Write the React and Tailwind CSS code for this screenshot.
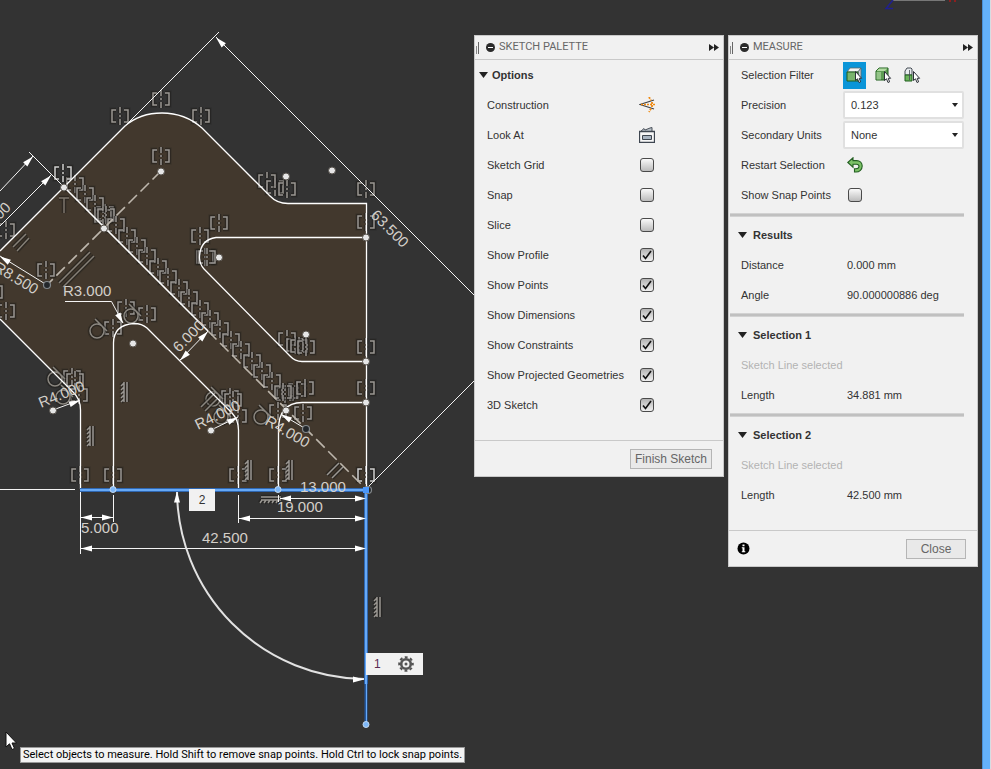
import React, { useState } from "react";

const UI_FONT = "font-['Liberation_Sans',Arial,sans-serif]";

/* ---------- sketch canvas glyphs ---------- */

const SYMMETRY =
  "M-4 -6H-8V6H-4M4 -6H8V6H4M0 -9V-3M0 -1V1M0 3V9";
const TANGENT = "M-7 0a7 7 0 1 0 14 0a7 7 0 1 0 -14 0M-2 -12L10 0";
const FIXED =
  "M3 -10V10M0 -10V10M0 -9L-3 -6M0 -5L-3 -2M0 -1L-3 2M0 3L-3 6M0 7L-3 10";
const FIXED_FLAT =
  "M-10 -3H10M-10 0H10M-9 0L-11 3M-5 0L-7 3M-1 0L-3 3M3 0L1 3M7 0L5 3";

function Glyph({ d, x, y, color = "#9a9792" }) {
  return (
    <g transform={`translate(${x} ${y})`} fill="none">
      <path d={d} stroke="#1d1b19" strokeOpacity="0.25" strokeWidth="5" />
      <path d={d} stroke="#1d1b19" strokeOpacity="0.5" strokeWidth="3.4" />
      <path d={d} stroke={color} strokeWidth="1.5" />
    </g>
  );
}

const chain = Array.from({ length: 21 }, (_, i) => [
  Math.round(74.5 + i * 10.42),
  Math.round(183.5 + i * 10.42),
]);

const symmetryMarks = [
  [161, 99], [120, 116], [201, 116], [161, 156], [105, 213], [103, 216],
  [219, 223], [200, 236], [205, 257], [207, 257],
  [267, 181], [275, 187], [287, 189], [366, 189], [366, 222], [366, 347],
  [366, 388], [287, 339], [295, 345], [299, 346], [306, 347],
  [285, 394], [290, 392], [297, 390], [305, 388], [278, 411], [303, 413],
  [238, 475], [278, 475], [80, 475], [113, 475],
  [6, 230], [46, 270], [6, 311], [-6, 292],
  [126, 308], [147, 314], [113, 328],
  [72, 377], [75, 380], [79, 395],
  [230, 397], [233, 400], [238, 416],
];
const tangentMarks = [
  [97, 331], [131, 316], [55, 379], [63, 397], [213, 399], [221, 417], [261, 417],
];
const fixedMarks = [[90, 436], [124, 392], [248, 470], [289, 470], [377, 607]];
const points = [
  [64, 187], [161, 171], [104, 228], [366, 237], [366, 361], [366, 402],
  [286, 176], [332, 170], [219, 257], [306, 334], [133, 343], [53, 410],
  [211, 430], [286, 410],
];
const hollowPoints = [[47, 285], [306, 429], [368, 490]];
const bluePoints = [[113, 489], [278, 489], [366, 724]];

const arrows = [
  [216, 37, 225], [33, 156, -45], [51, 175, -45],
  [0, 256, 212], [123, 323, 62], [208, 331, -45], [180, 360, 135],
  [80, 400, -20], [238, 417, -25], [281, 414, 210],
  [81, 517, 180], [113, 517, 0], [81, 548, 180], [366, 548, 0],
  [280, 498, 180], [366, 498, 0], [239, 518, 180], [366, 518, 0],
  [177, 491, -90], [364, 679, 0],
];

const dimensions = [
  ["63.500", 370, 216, 45], ["R8.500", -7, 270, 31], ["R3.000", 63, 296, 0],
  ["6.000", 179, 353, -45], ["R4.000", 41, 408, -22], ["R4.000", 198, 430, -26],
  ["R4.000", 264, 424, 30], ["5.000", 81, 533, 0], ["42.500", 202, 543, 0],
  ["13.000", 300, 492, 0], ["19.000", 277, 512, 0], ["8.500", -15, 235, -45],
];

function SketchCanvas() {
  return (
    <svg className="absolute inset-0 h-full w-full" aria-label="Sketch canvas">
      <path
        d="M366 489V203H288Q277 203 270 196L202 128Q185 113 162 113Q140 113 125 126L0 251V319L73 392Q80 399 80 410V489Z"
        fill="#42382d"
      />

      {symmetryMarks.map(([x, y], i) => (
        <Glyph key={i} d={SYMMETRY} x={x} y={y} />
      ))}
      {chain.map(([x, y], i) => (
        <Glyph key={i} d={SYMMETRY} x={x} y={y} />
      ))}
      <Glyph d={SYMMETRY} x={63} y={173} color="#d0d0d0" />
      <Glyph d={SYMMETRY} x={366} y={475} color="#d0d0d0" />
      {tangentMarks.map(([x, y], i) => (
        <Glyph key={i} d={TANGENT} x={x} y={y} color="#8a867f" />
      ))}
      {fixedMarks.map(([x, y], i) => (
        <Glyph key={i} d={FIXED} x={x} y={y} />
      ))}
      <Glyph d={FIXED_FLAT} x={271} y={500} />
      <Glyph d="M-5 -7H5M0 -7V8" x={64} y={205} color="#7d766c" />
      <Glyph d="M-8 5L5 -8M-4 9L8 -4" x={21} y={242} color="#857f76" />
      <Glyph d="M-18 14L13 -17M-14 18L17 -13" x={77} y={269} color="#857f76" />
      <Glyph d="M-8 5L4 -7M-3 8L8 -3" x={335} y={470} />
      <Glyph d="M-12 8L2 -6M-8 12L4 0" x={213} y={399} color="#8a867f" />

      {/* profile edges */}
      <g fill="none" stroke="#ffffff" strokeWidth="1.3">
        <path d="M0 251L125 126Q140 113 162 113Q185 113 202 128L270 196Q277 203.500 288 203.500H366.500V489" />
        <path d="M0 319L73 392Q80.500 399 80.500 410V489" />
        <path d="M366 237.500H216Q199.500 240 199.500 258Q200 265 204 269L290 356Q295 361.500 302 361.500H366" />
        <path d="M366 402.500H302Q278.500 403 278.500 430V489" />
        <path d="M238.500 489V430Q238.500 420 232 413L147 328Q142 323.500 134 323.500Q113.500 325 113.500 343V489" />
        <path d="M64 187L208 331" strokeWidth="1.6" />
      </g>

      {/* construction lines */}
      <g fill="none" stroke="#bdb6ac" strokeWidth="1.6">
        <path d="M208 331L366 489" strokeDasharray="12 5" />
        <path d="M161 171L47 285" strokeDasharray="12 5" />
      </g>

      {/* dimension and extension lines */}
      <g fill="none" stroke="#f4f4f4" strokeWidth="1">
        <path d="M125 126L219 32M216 37L474 295M366 489L474 381" />
        <path d="M29 152L64 187M33 156L0 191M51 175L0 226" />
        <path d="M0 256L47 285M65 301.500H111.500L123 323M208 331L180 360" />
        <path d="M53 410L80 400M211 430L238 417M281 414L306 429" />
        <path d="M0 489.500H75M80.500 489V554M113.500 495V522M238.500 495V523M278.500 495V502M366.500 495V553" />
        <path d="M81 517.500H113M81 548.500H366M280 498.500H366M239 518.500H366" />
      </g>

      {/* measured angle and highlighted selections */}
      <path d="M177 491A189 189 0 0 0 364 679" fill="none" stroke="#e2e2e2" strokeWidth="2" />
      <g fill="none">
        <path d="M80 490H366V684" stroke="#2f67b1" strokeWidth="4" />
        <path d="M366 680V724" stroke="#2559a0" strokeWidth="3" />
        <path d="M80 490H366V684" stroke="#66a9f7" strokeWidth="2" />
        <path d="M366.500 684V724" stroke="#66a9f7" strokeWidth="1" />
      </g>

      {arrows.map(([x, y, a], i) => (
        <path
          key={i}
          d="M0 0L-11 -3V3Z"
          fill="#ffffff"
          transform={`translate(${x} ${y + 0.5}) rotate(${a})`}
        />
      ))}
      {points.map(([x, y], i) => (
        <circle key={i} cx={x} cy={y + 0.5} r="3.5" fill="#e6e6e6" stroke="#55504a" strokeWidth="1" />
      ))}
      {hollowPoints.map(([x, y], i) => (
        <circle key={i} cx={x} cy={y} r="3.500" fill="#23272b" stroke="#82878b" strokeWidth="1.2" />
      ))}
      {bluePoints.map(([x, y], i) => (
        <circle key={i} cx={x} cy={y + 0.5} r="3" fill="#7db7f8" stroke="#c2d8ef" strokeWidth="1" />
      ))}
      <path d="M363 487H369V493H363Z" fill="#4b98fb" />

      <g fill="#d3cfc9" className="font-['Liberation_Sans',Arial,sans-serif] text-[15px]">
        {dimensions.map(([t, x, y, a], i) => (
          <text key={i} transform={`translate(${x} ${y}) rotate(${a})`}>
            {t}
          </text>
        ))}
      </g>

      {/* axis triad fragment */}
      <path d="M892 0.500H945" stroke="#777" strokeWidth="1" />
      <path d="M893 0L886 8.500H893" fill="none" stroke="#20208f" strokeWidth="1.500" />
      <path d="M949 1H951M954 1H956" stroke="#8c1f1f" strokeWidth="2" />
    </svg>
  );
}

/* ---------- icons ---------- */

function ConstructionIcon() {
  return (
    <svg width="16" height="16" viewBox="0 0 16 16" fill="none">
      <path d="M15 3L1 7.500L15 12" stroke="#3d4248" strokeWidth="1.3" />
      <path d="M2 7.500H16" stroke="#f08a12" strokeWidth="1.3" strokeDasharray="2 1" />
      <path d="M10 0L12 3.500M13 5V10M12 11.500L10 15" stroke="#f08a12" strokeWidth="1.8" strokeDasharray="2 1" />
    </svg>
  );
}

function LookAtIcon() {
  return (
    <svg width="16" height="16" viewBox="0 0 16 16" fill="none">
      <path d="M1.500 4.500L5 1.500L6 3L11 1L13 0.500V4.500" fill="#b9c0c7" stroke="#4b525b" />
      <path d="M0.500 4.500H15.500V15.500H0.500Z" fill="#f7f7f7" stroke="#3e4650" strokeWidth="1.3" />
      <path d="M3.500 8.500H12.500V12.500H3.500Z" fill="#a9b5c2" stroke="#3e4650" />
    </svg>
  );
}

function Pointer() {
  return (
    <path
      d="M9.500 4.500V13.500L11.500 11.800L13 15.500L14.600 14.800L13.200 11.300H15.600Z"
      fill="#fff"
      stroke="#2c3038"
      strokeWidth="1"
    />
  );
}

function FaceFilterIcon() {
  return (
    <svg width="17" height="17" viewBox="0 0 17 17">
      <path d="M1 5L4 1H15L12 5Z" fill="#f4f4f4" stroke="#5d6a6a" strokeWidth="0.8" />
      <path d="M12 5L15 1V11L12 14Z" fill="#c7ccd2" stroke="#5d6a6a" strokeWidth="0.8" />
      <path d="M1 5H12V14H1Z" fill="#79b36c" stroke="#1f5f1c" strokeWidth="1" />
      <Pointer />
    </svg>
  );
}

function BodyFilterIcon() {
  return (
    <svg width="17" height="17" viewBox="0 0 17 17">
      <path d="M1 4L4 1H13V10L10 13H1Z" fill="#5c9c53" stroke="#1f5f1c" strokeWidth="1" />
      <path d="M1.500 4L4 1.500H12.500L10 4Z" fill="#b4dba4" />
      <path d="M1.500 5H6V12.500H1.500Z" fill="#94c488" />
      <Pointer />
    </svg>
  );
}

function ComponentFilterIcon() {
  return (
    <svg width="17" height="17" viewBox="0 0 17 17">
      <path d="M1 4L3 1H7L8 2V8H1Z" fill="#e9ecef" stroke="#454c54" strokeWidth="1" />
      <path d="M1 8H8V14H1Z" fill="#6cb35c" stroke="#1f5f1c" strokeWidth="1" />
      <path d="M5.500 3V13" stroke="#454c54" strokeWidth="0.8" />
      <Pointer />
    </svg>
  );
}

function RestartIcon() {
  return (
    <svg width="16" height="16" viewBox="0 0 16 16">
      <path
        d="M0.800 5.500L6 0.800V3.600H9.500C13 3.600 15.200 6 15.200 9C15.200 12.500 12.500 15 9 15H7.500V11.800H9C10.800 11.800 12 10.700 12 9.300C12 8 11 7.200 9.500 7.200H6V10.200Z"
        fill="#7cc267"
        stroke="#235f22"
        strokeWidth="1.1"
      />
    </svg>
  );
}

function GearIcon() {
  return (
    <svg width="16" height="16" viewBox="0 0 16 16" fill="none">
      <circle cx="8" cy="8" r="6.800" stroke="#555" strokeWidth="2" strokeDasharray="2.9 2.44" strokeDashoffset="1.45" />
      <circle cx="8" cy="8" r="4.800" stroke="#555" strokeWidth="2.600" />
      <circle cx="8" cy="8" r="1.500" fill="#555" />
    </svg>
  );
}

function InfoIcon() {
  return (
    <svg width="13" height="13" viewBox="0 0 13 13">
      <circle cx="6.5" cy="6.5" r="6" fill="#000" />
      <path d="M5.500 2.500H7.500V4.300H5.500ZM4.800 5.300H7.500V9.300H8.300V10.300H4.800V9.300H5.500V6.300H4.800Z" fill="#fff" />
    </svg>
  );
}

/* ---------- panel parts ---------- */

function Panel({ title, footer, children }) {
  return (
    <section className="w-[250px] border border-[#c9c9c9] bg-[#f1f1f1] text-[11px] text-[#333]">
      <header className="flex h-6 items-center border-b border-[#c9c9c9] pl-px pr-1">
        <span className="flex h-3 w-[3px] items-end justify-between border-r border-[#666]">
          <span className="h-2 w-px bg-[#888]" />
        </span>
        <button aria-label={`Collapse ${title}`} className="ml-[7px] flex h-[9px] w-[9px] items-center justify-center rounded-full bg-[#2b2b2b]">
          <span className="h-px w-[5px] bg-white" />
        </button>
        <h2 className="ml-1 flex-1 font-[Roboto,sans-serif] text-[11px] text-[#666]">{title}</h2>
        <button aria-label={`Dock ${title}`}>
          <svg width="10" height="7" viewBox="0 0 10 7" fill="#222">
            <path d="M0 0L5 3.500L0 7ZM5 0L10 3.500L5 7Z" />
          </svg>
        </button>
      </header>
      {children}
      <footer className="flex h-9 items-center border-t border-[#c9c9c9]">{footer}</footer>
    </section>
  );
}

function SectionTitle({ children, className }) {
  return (
    <button className={`flex h-[30px] w-full items-center font-bold ${className}`}>
      <svg width="9" height="6" viewBox="0 0 9 6" fill="#222">
        <path d="M0 0H9L4.500 6Z" />
      </svg>
      {children}
    </button>
  );
}

function CheckBox({ id, initial }) {
  const [on, setOn] = useState(initial);
  return (
    <span className="grid h-[14px] w-[14px] place-items-center">
      <input
        id={id}
        type="checkbox"
        checked={on}
        onChange={() => setOn(!on)}
        className="col-start-1 row-start-1 h-[14px] w-[14px] appearance-none rounded-[3px] border border-[#4a4a4a] bg-linear-to-b from-[#fafafa] to-[#bcbcbc] checked:from-[#b4b4b4] checked:to-[#f0f0f0]"
      />
      {on && (
        <svg className="pointer-events-none col-start-1 row-start-1" width="10" height="10" viewBox="0 0 10 10" fill="none">
          <path d="M1 5.500L3.500 8.500L9 1" stroke="#111" strokeWidth="1.6" />
        </svg>
      )}
    </span>
  );
}

function PaletteRow({ label, id, children }) {
  return (
    <div className="flex h-[30px] items-center pl-3">
      <label htmlFor={id} className="w-[143px] whitespace-nowrap">{label}</label>
      <div className="flex w-[34px] justify-center">{children}</div>
    </div>
  );
}

function MeasureRow({ label, id, children }) {
  return (
    <div className="flex h-[30px] items-center pl-3">
      <label htmlFor={id} className="w-[102px] whitespace-nowrap">{label}</label>
      {children}
    </div>
  );
}

function ResultRow({ label, value }) {
  return (
    <div className="flex h-[30px] items-center pl-3">
      <span className="w-[106px]">{label}</span>
      <span>{value}</span>
    </div>
  );
}

function Select({ id, options }) {
  return (
    <span className="grid h-[28px] w-[121px] items-center">
      <select id={id} className="col-start-1 row-start-1 h-full w-full appearance-none rounded-[2px] border-2 border-[#e0e0e0] bg-white pl-[6px] text-[11px]">
        {options.map((o) => (
          <option key={o}>{o}</option>
        ))}
      </select>
      <svg className="pointer-events-none col-start-1 row-start-1 mr-[6px] justify-self-end" width="6" height="4" viewBox="0 0 6 4">
        <path d="M0 0H6L3 4Z" fill="#222" />
      </svg>
    </span>
  );
}

function Divider() {
  return (
    <div className="flex h-[10px] items-center pl-px pr-[13px]">
      <hr className="h-1 flex-1 border-x-0 border-y border-[#d2d2d2] bg-[#c0c0c0]" />
    </div>
  );
}

const toggles = [
  ["Sketch Grid", false], ["Snap", false], ["Slice", false],
  ["Show Profile", true], ["Show Points", true], ["Show Dimensions", true],
  ["Show Constraints", true], ["Show Projected Geometries", true], ["3D Sketch", true],
];

function SketchPalette() {
  return (
    <Panel
      title="SKETCH PALETTE"
      footer={
        <button className="ml-auto mr-[11px] h-5 w-[82px] whitespace-nowrap border border-[#b5b5b5] bg-[#e9e9e9] text-xs text-[#666]">
          Finish Sketch
        </button>
      }
    >
      <SectionTitle className="gap-1 pl-1">Options</SectionTitle>
      <PaletteRow label="Construction" id="construction">
        <button id="construction" aria-label="Construction"><ConstructionIcon /></button>
      </PaletteRow>
      <PaletteRow label="Look At" id="look-at">
        <button id="look-at" aria-label="Look At"><LookAtIcon /></button>
      </PaletteRow>
      {toggles.map(([label, on]) => (
        <PaletteRow key={label} label={label} id={label}>
          <CheckBox id={label} initial={on} />
        </PaletteRow>
      ))}
      <div className="h-5" />
    </Panel>
  );
}

function MeasurePanel() {
  return (
    <Panel
      title="MEASURE"
      footer={
        <>
          <button aria-label="Information" className="ml-2"><InfoIcon /></button>
          <button className="ml-auto mr-[11px] h-5 w-[60px] border border-[#b5b5b5] bg-[#e9e9e9] text-xs text-[#666]">
            Close
          </button>
        </>
      }
    >
      <div className="flex h-[30px] items-center pl-3">
        <span className="w-[102px]">Selection Filter</span>
        <div className="flex items-center">
          <button aria-label="Select faces" className="grid h-[27px] w-[23px] place-items-center bg-[#0a95d8]"><FaceFilterIcon /></button>
          <button aria-label="Select bodies" className="ml-[6px] grid h-[27px] w-[23px] place-items-center"><BodyFilterIcon /></button>
          <button aria-label="Select components" className="ml-[6px] grid h-[27px] w-[23px] place-items-center"><ComponentFilterIcon /></button>
        </div>
      </div>
      <MeasureRow label="Precision" id="precision">
        <Select id="precision" options={["0.123", "0.12", "0.1", "0"]} />
      </MeasureRow>
      <MeasureRow label="Secondary Units" id="units">
        <Select id="units" options={["None", "Inch", "Foot"]} />
      </MeasureRow>
      <MeasureRow label="Restart Selection" id="restart">
        <button id="restart" aria-label="Restart Selection" className="ml-1"><RestartIcon /></button>
      </MeasureRow>
      <MeasureRow label="Show Snap Points" id="snap-points">
        <span className="ml-[5px]"><CheckBox id="snap-points" initial={false} /></span>
      </MeasureRow>
      <Divider />
      <SectionTitle className="gap-[6px] pl-[9px]">Results</SectionTitle>
      <ResultRow label="Distance" value="0.000 mm" />
      <ResultRow label="Angle" value="90.000000886 deg" />
      <Divider />
      <SectionTitle className="gap-[6px] pl-[9px]">Selection 1</SectionTitle>
      <p className="flex h-[30px] items-center pl-3 text-[#b3b3b3]">Sketch Line selected</p>
      <ResultRow label="Length" value="34.881 mm" />
      <Divider />
      <SectionTitle className="gap-[6px] pl-[9px]">Selection 2</SectionTitle>
      <p className="flex h-[30px] items-center pl-3 text-[#b3b3b3]">Sketch Line selected</p>
      <ResultRow label="Length" value="42.500 mm" />
      <div className="h-5" />
    </Panel>
  );
}

export default function App() {
  return (
    <div className={`flex h-screen overflow-hidden bg-[#333333] ${UI_FONT}`}>
      <main className="relative flex-1 overflow-hidden">
        <SketchCanvas />

        <span className="absolute left-[189px] top-[489px] grid h-[22px] w-[26px] place-items-center bg-[#f1f1f1] text-xs text-[#333]">2</span>
        <div className="absolute left-[366px] top-[653px] flex h-[22px] w-[57px] items-center justify-between bg-[#f1f1f1] pl-2 pr-[9px] text-xs text-[#5a2a52]">
          <span>1</span>
          <button aria-label="Selection settings"><GearIcon /></button>
        </div>

        <div className="absolute right-1 top-[35px] flex items-start gap-1">
          <SketchPalette />
          <MeasurePanel />
        </div>

        <svg className="absolute left-[5px] top-[731px]" width="13" height="20" viewBox="0 0 13 20">
          <path d="M1 1V16L4.500 12.800L7 18.500L9.500 17.400L7 12H11.500Z" fill="#fff" stroke="#111" strokeWidth="1" />
        </svg>
        <div role="tooltip" className="absolute left-5 top-[747px] flex h-4 items-center whitespace-nowrap border border-[#999] bg-[#f3f3f3] px-0.5 font-[Roboto,sans-serif] text-[11px] text-black">
          Select objects to measure. Hold Shift to remove snap points. Hold Ctrl to lock snap points.
        </div>
      </main>
      <div className="w-[9px] border-l border-r border-l-[#4a8fd6] border-r-[#d8dde2] bg-[#64b1fb]" />
    </div>
  );
}
